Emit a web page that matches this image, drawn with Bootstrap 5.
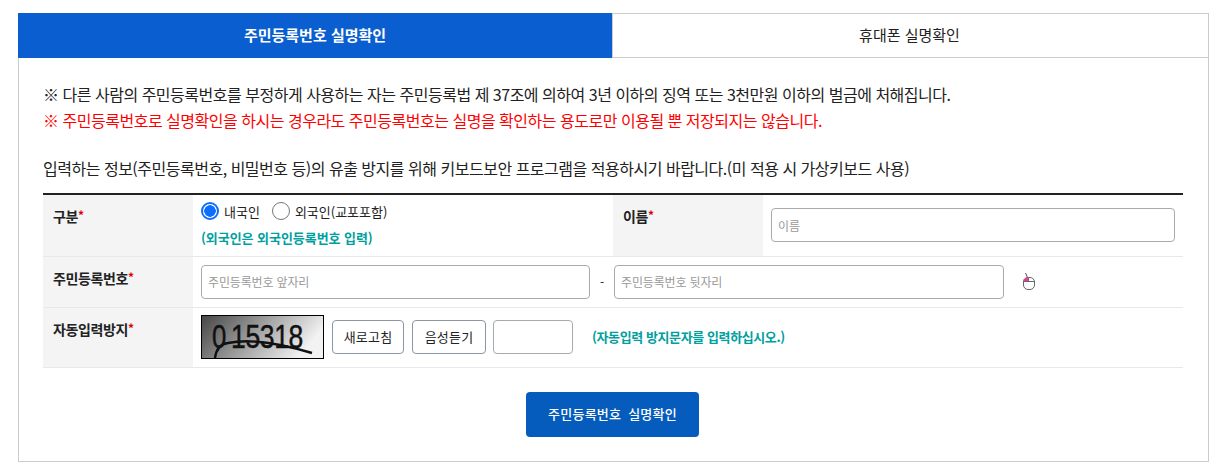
<!DOCTYPE html>
<html lang="ko">
<head>
<meta charset="utf-8">
<title>실명확인</title>
<link href="https://cdn.jsdelivr.net/npm/bootstrap@5.3.0/dist/css/bootstrap.min.css" rel="stylesheet">
<style>
html,body{background:#fff;height:473px;overflow:hidden}
body{font-family:"Noto Sans CJK KR","Noto Sans",sans-serif;font-size:15px;color:#222;padding:13px 10px 0 18px;letter-spacing:-.4px}
.shell{border:1px solid #ccc;border-top:0;height:449px;width:1191px}
.tabs-row{height:45px;margin-left:-1px;margin-right:-1px}
.tab-item{height:45px;display:flex;align-items:center;justify-content:center;font-size:15px;letter-spacing:0;text-decoration:none}
.tab-on{background:#0a5ecf;color:#fff;font-weight:700;flex:0 0 594px}
.tab-off{background:#fff;color:#222;border:1px solid #ccc;flex:1 1 auto;padding-right:2px}
.inner{padding:23px 24px 0 24px}
.note{margin:0;line-height:26px;font-size:16px;letter-spacing:-.49px}
.note-red{color:#f00}
.gap-line{height:22px}
.form-grid{border-top:2px solid #222;margin-top:12px;width:1140px;border-collapse:collapse;table-layout:fixed}
.form-grid th{background:#f4f4f4;font-size:14px;font-weight:700;padding:11px 10px 0;vertical-align:top;color:#222;letter-spacing:-.4px}
.form-grid td{padding:0 8px;vertical-align:middle}
.form-grid tr{border-bottom:1px solid #e8e8e8}
.req{color:#d00;font-size:12px;vertical-align:2px;line-height:1}
.r1{height:62px}.r2{height:51px}.r3{height:60px}
.fld{height:34px;border:1px solid #aaa;border-radius:4px;padding:0 6px;font-size:12px;font-family:inherit;color:#222;background:#fff;outline:0;letter-spacing:-.15px}
.fld::placeholder{color:#999;opacity:1}
.fld-name{width:404px}
.fld-id{width:389px}
.fld-id2{width:390px}
.fld-cap{width:80px}
.radio-row{font-size:13px;height:20px;margin-top:-3px;letter-spacing:0}
.radio-dot{width:18px;height:18px;margin:0;border:1px solid #777;border-radius:50%;appearance:none;background:#fff;flex:none}
.radio-dot:checked{border:2px solid #0d6efd;background:radial-gradient(circle,#0d6efd 0 5.500px,#fff 6px)}
.radio-txt{margin-left:5px}
.radio-second{margin-left:12px}
.hint{color:#00a0a0;font-size:13px;font-weight:700;letter-spacing:-.05px}
.hint-top{margin-top:9px;height:16px;line-height:16px}
.hint-cap{letter-spacing:-.4px;margin-left:19px}
.dash{width:24px;text-align:center;font-size:12px;flex:none}
.cap-img{width:123px;height:44px;border:1px solid #000;display:block;flex:none}
.sm-btn{height:34px;border:1px solid #8c96a3;border-radius:4px;background:#fff;color:#222;font-size:13px;padding:0;width:72px;letter-spacing:.2px}
.sm-btn-b{width:74px}
.submit-btn{width:173px;height:45px;background:#055cbd;color:#fff;border:0;border-radius:4px;font-size:13px;font-weight:500;letter-spacing:.25px;padding:0;word-spacing:3px}
.submit-btn:hover{background:#055cbd;color:#fff}
.submit-wrap{padding:24px 2px 0 0}
.mouse-ico{margin-left:18px;flex:none}
</style>
</head>
<body>
<div class="shell">
  <div class="d-flex tabs-row">
    <a class="tab-item tab-on" href="#">주민등록번호 실명확인</a>
    <a class="tab-item tab-off" href="#">휴대폰 실명확인</a>
  </div>
  <div class="inner">
    <p class="note">※ 다른 사람의 주민등록번호를 부정하게 사용하는 자는 주민등록법 제 37조에 의하여 3년 이하의 징역 또는 3천만원 이하의 벌금에 처해집니다.</p>
    <p class="note note-red">※ 주민등록번호로 실명확인을 하시는 경우라도 주민등록번호는 실명을 확인하는 용도로만 이용될 뿐 저장되지는 않습니다.</p>
    <div class="gap-line"></div>
    <p class="note">입력하는 정보(주민등록번호, 비밀번호 등)의 유출 방지를 위해 키보드보안 프로그램을 적용하시기 바랍니다.(미 적용 시 가상키보드 사용)</p>
    <table class="form-grid">
      <colgroup><col style="width:150px"><col style="width:420px"><col style="width:150px"><col></colgroup>
      <tr class="r1">
        <th>구분<span class="req">*</span></th>
        <td>
          <div class="d-flex align-items-center radio-row">
            <input class="radio-dot" type="radio" name="k" checked aria-label="내국인">
            <span class="radio-txt">내국인</span>
            <input class="radio-dot radio-second" type="radio" name="k" aria-label="외국인">
            <span class="radio-txt">외국인(교포포함)</span>
          </div>
          <div class="hint hint-top">(외국인은 외국인등록번호 입력)</div>
        </td>
        <th>이름<span class="req">*</span></th>
        <td><input class="fld fld-name d-block" placeholder="이름"></td>
      </tr>
      <tr class="r2">
        <th>주민등록번호<span class="req">*</span></th>
        <td colspan="3">
          <div class="d-flex align-items-center">
            <input class="fld fld-id" placeholder="주민등록번호 앞자리">
            <span class="dash">-</span>
            <input class="fld fld-id2" placeholder="주민등록번호 뒷자리">
            <svg class="mouse-ico" width="14" height="20" viewBox="0 0 14 20" fill="none">
              <path d="M3.500 1 L5.500 5.500" stroke="#555"/>
              <rect x="1.500" y="5.500" width="11" height="12" rx="4.500" fill="#fff" stroke="#666"/>
              <path d="M1.500 9.500H12.500M6.500 5.500V9.500" stroke="#666"/>
              <path d="M1.500 9V7.500L4 5.500H6.500V9Z" fill="#e0409a"/>
            </svg>
          </div>
        </td>
      </tr>
      <tr class="r3">
        <th>자동입력방지<span class="req">*</span></th>
        <td colspan="3">
          <div class="d-flex align-items-center">
            <svg class="cap-img" viewBox="0 0 121 42">
              <defs><linearGradient id="cg" x1="0" y1="0" x2="1" y2=".3"><stop offset="0" stop-color="#474747"/><stop offset="1" stop-color="#f2f2f2"/></linearGradient></defs>
              <rect width="121" height="42" fill="url(#cg)"/>
              <text x="10" y="32" font-family="Liberation Sans,sans-serif" font-size="34" textLength="14" lengthAdjust="spacingAndGlyphs" fill="#111" stroke="#111" stroke-width=".5">0</text>
              <text x="29" y="32" font-family="Liberation Sans,sans-serif" font-size="34" textLength="72" lengthAdjust="spacingAndGlyphs" fill="#111" stroke="#111" stroke-width=".5">15318</text>
              <path d="M13 42 C14 34 18 28 26 27 C45 23 70 25 110 37" fill="none" stroke="#111" stroke-width="2.400"/>
            </svg>
            <button class="sm-btn ms-2" type="button">새로고침</button>
            <button class="sm-btn sm-btn-b ms-2" type="button">음성듣기</button>
            <input class="fld fld-cap" style="margin-left:7px" aria-label="자동입력 방지문자">
            <span class="hint hint-cap">(자동입력 방지문자를 입력하십시오.)</span>
          </div>
        </td>
      </tr>
    </table>
    <div class="text-center submit-wrap">
      <button class="btn submit-btn" type="button">주민등록번호 실명확인</button>
    </div>
  </div>
</div>
<script src="https://cdn.jsdelivr.net/npm/bootstrap@5.3.0/dist/js/bootstrap.bundle.min.js"></script>
</body>
</html>
